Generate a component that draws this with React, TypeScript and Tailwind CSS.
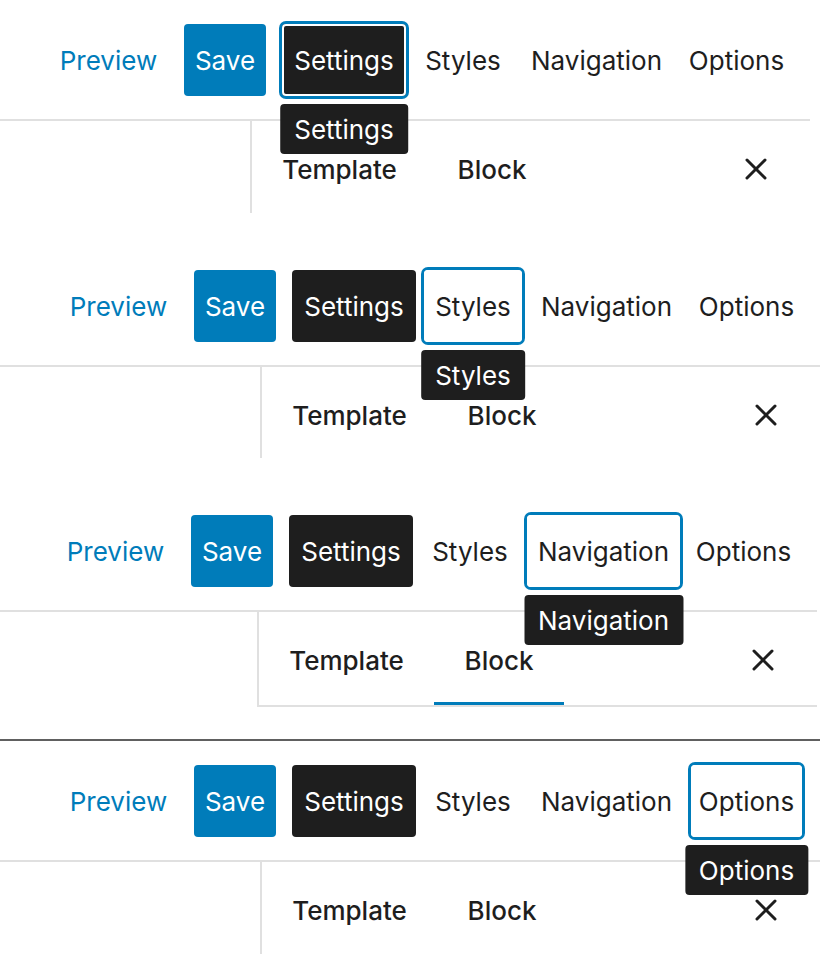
import { X } from "lucide-react";

type Item = { label: string; width: string };

const tools: Item[] = [
  { label: "Settings", width: "w-[124px]" },
  { label: "Styles", width: "w-[98px]" },
  { label: "Navigation", width: "w-[153px]" },
  { label: "Options", width: "w-[111px]" },
];

const ToolButton = ({ item, focused }: { item: Item; focused: boolean }) => {
  const pressed = item.label === "Settings";
  return (
    <div className="relative">
      <button
        className={`flex h-[72px] ${item.width} items-center justify-center rounded-[4px] pt-[2px] text-[26px] ${
          pressed ? "bg-[#1e1e1e] text-white" : "bg-white text-[#1e1e1e]"
        } ${focused ? "ring-3 ring-[#007cba] inset-ring-2 inset-ring-white" : ""}`}
      >
        {item.label}
      </button>
      {focused && (
        <div className="absolute left-1/2 top-[calc(100%+8px)] z-10 flex h-[50px] -translate-x-1/2 items-center whitespace-nowrap rounded-[4px] bg-[#1e1e1e] px-[14px] pt-[1px] text-[26px] text-white">
          {item.label}
        </div>
      )}
    </div>
  );
};

const EditorPanel = ({
  focus,
  width,
  height,
  crop,
  showTab = false,
}: {
  focus: string;
  width: string;
  height: string;
  crop: string;
  showTab?: boolean;
}) => {
  return (
    <section className={`${height} w-full bg-white`}>
      <div className={`${crop} ${width} overflow-hidden`}>
        <header className="flex h-[121px] items-center justify-end border-b-2 border-[#e0e0e0] pr-[18px]">
          <button className="flex h-[72px] w-[119px] items-center justify-center pt-[2px] text-[26px] text-[#007cba]">
            Preview
          </button>
          <button className="ml-4 flex h-[72px] w-[82px] items-center justify-center rounded-[4px] bg-[#007cba] pt-[2px] text-[26px] text-white">
            Save
          </button>
          <div className="ml-4 flex items-center gap-2">
            {tools.map((t) => (
              <ToolButton key={t.label} item={t} focused={t.label === focus} />
            ))}
          </div>
        </header>
        <div className="flex justify-end">
          <div className="w-[560px] border-l-2 border-[#e0e0e0]">
            <div className="flex h-[95px] items-center border-b-2 border-[#e0e0e0]">
              <button className="flex h-full w-[175px] items-center justify-center pt-[3px] text-[26px] font-medium text-[#1e1e1e]">
                Template
              </button>
              <button
                className={`flex h-full w-[130px] items-center justify-center pt-[3px] text-[26px] font-medium text-[#1e1e1e] ${
                  showTab ? "shadow-[inset_0_-3px_0_#007cba]" : ""
                }`}
              >
                Block
              </button>
              <div className="flex-1" />
              <button className="mr-[30px] flex h-12 w-12 items-center justify-center pt-[3px] text-[#1e1e1e]">
                <X size={36} strokeWidth={2} />
              </button>
            </div>
          </div>
        </div>
      </div>
    </section>
  );
};

export default function App() {
  return (
    <div className="h-[954px] w-[820px] overflow-hidden bg-white font-['Inter',sans-serif]">
      <EditorPanel focus="Settings" width="w-[810px]" height="h-[246px]" crop="h-[213px]" />
      <EditorPanel focus="Styles" width="w-[820px]" height="h-[245px]" crop="h-[212px]" />
      <EditorPanel focus="Navigation" width="w-[817px]" height="h-[248px]" crop="h-[248px]" showTab />
      <div className="h-[2px] w-full bg-[#606060]" />
      <EditorPanel focus="Options" width="w-[820px]" height="h-[213px]" crop="h-[213px]" />
    </div>
  );
}
